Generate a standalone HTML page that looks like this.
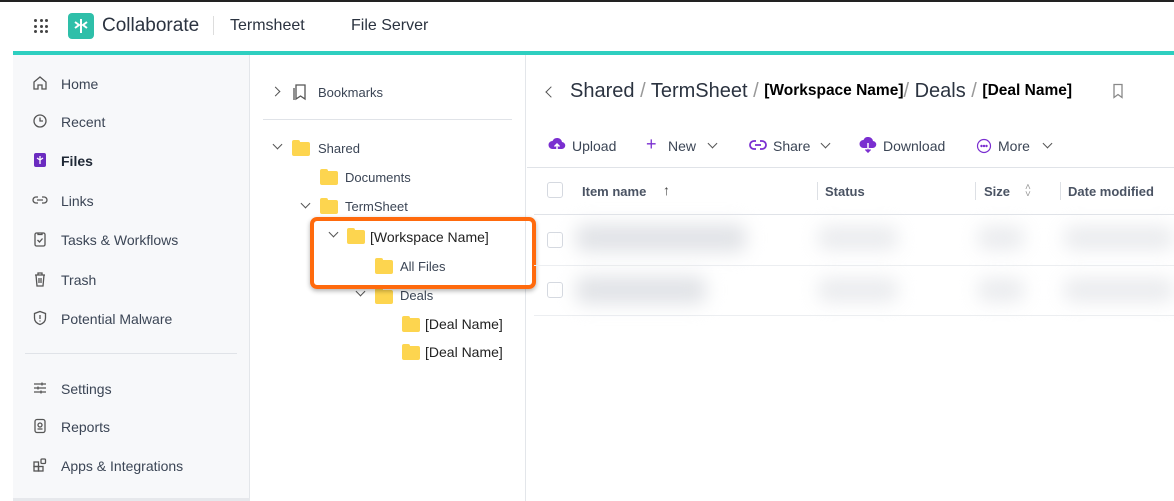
<!DOCTYPE html>
<html><head><meta charset="utf-8"><style>
*{box-sizing:border-box;margin:0;padding:0}
body{width:1174px;height:501px;overflow:hidden;background:#fff;font-family:"Liberation Sans",sans-serif;color:#2f3a4a;position:relative}
.a{position:absolute}
.nav{font-size:14px;color:#3b4555}
.nav svg{position:absolute;left:-29px;top:-1px}
.tree{font-size:13px;color:#3b4555}
.fold{position:absolute;width:18px;height:14px;background:#fdd54f;border-radius:2px}
.fold:before{content:"";position:absolute;left:0;top:-2px;width:8px;height:4px;background:#fdd54f;border-radius:2px 2px 0 0}
.chev{position:absolute;width:7px;height:7px;border-right:1.5px solid #555;border-bottom:1.5px solid #555;transform:rotate(45deg)}
.cb{position:absolute;width:16px;height:16px;border:1px solid #d5d9e0;border-radius:3px;background:#fff}
.tb{font-size:14px;color:#3b4555}
.blur{position:absolute;background:#e1e3e7;filter:blur(9px);border-radius:8px}
</style></head><body>
<div class="a" style="left:0;top:0;width:1174px;height:2px;background:#222"></div>
<div class="a" style="left:34px;top:19px;width:14px;height:14px;display:grid;grid-template-columns:repeat(3,3px);gap:2.5px">
<i style="background:#444;border-radius:50%"></i><i style="background:#444;border-radius:50%"></i><i style="background:#444;border-radius:50%"></i><i style="background:#444;border-radius:50%"></i><i style="background:#444;border-radius:50%"></i><i style="background:#444;border-radius:50%"></i><i style="background:#444;border-radius:50%"></i><i style="background:#444;border-radius:50%"></i><i style="background:#444;border-radius:50%"></i></div>
<div class="a" style="left:68px;top:13px;width:26px;height:26px;background:#2ebfa9;border-radius:4px">
<svg width="26" height="26" viewBox="0 0 26 26" stroke="#fff" stroke-width="2" fill="none"><path d="M13 6v14M7 9l4 3-4 3M19 9l-4 3 4 3"/></svg></div>
<div class="a" style="left:102px;top:15px;font-size:19px;color:#2b3340">Collaborate</div>
<div class="a" style="left:213px;top:16px;width:1px;height:19px;background:#ddd"></div>
<div class="a" style="left:230px;top:17px;font-size:16px;color:#2b3340">Termsheet</div>
<div class="a" style="left:351px;top:17px;font-size:16px;color:#2b3340">File Server</div>
<div class="a" style="left:13px;top:51px;width:1161px;height:4px;background:#2ecfc0"></div>
<div class="a" style="left:13px;top:55px;width:237px;height:446px;background:#f7f8fa;border-right:1px solid #e3e6ea"></div>
<div class="a" style="left:13px;top:498px;width:237px;height:3px;background:#e6e8ec"></div>
<div class="a nav" style="left:61px;top:76px"><svg width="16" height="16" viewBox="0 0 16 16" fill="none" stroke="#555" stroke-width="1.3"><path d="M2 7l6-5 6 5v7h-4v-4H6v4H2z"/></svg>Home</div>
<div class="a nav" style="left:61px;top:114px"><svg width="16" height="16" viewBox="0 0 16 16" fill="none" stroke="#555" stroke-width="1.3"><circle cx="8" cy="8" r="6"/><path d="M8 4.5V8h3"/></svg>Recent</div>
<div class="a nav" style="left:61px;top:153px;font-weight:bold;color:#1f2835"><svg width="16" height="16" viewBox="0 0 16 16"><rect x="2" y="1" width="12" height="14" rx="2" fill="#6b2bc0"/><path d="M8 4v8M5 6l3 2 3-2" stroke="#fff" stroke-width="1.3" fill="none"/></svg>Files</div>
<div class="a nav" style="left:61px;top:193px"><svg width="16" height="16" viewBox="0 0 16 16" fill="none" stroke="#555" stroke-width="1.3"><path d="M6 5H4a3 3 0 000 6h2M10 5h2a3 3 0 010 6h-2M5 8h6"/></svg>Links</div>
<div class="a nav" style="left:61px;top:232px"><svg width="16" height="16" viewBox="0 0 16 16" fill="none" stroke="#555" stroke-width="1.3"><rect x="3" y="2" width="10" height="13" rx="1.5"/><path d="M6 2v1.5h4V2M5.5 9l2 2 3-3.5"/></svg>Tasks &amp; Workflows</div>
<div class="a nav" style="left:61px;top:272px"><svg width="16" height="16" viewBox="0 0 16 16" fill="none" stroke="#555" stroke-width="1.3"><path d="M3 4h10M6 4V2h4v2M4 4l1 11h6l1-11M7 7v5M9 7v5"/></svg>Trash</div>
<div class="a nav" style="left:61px;top:311px"><svg width="16" height="16" viewBox="0 0 16 16" fill="none" stroke="#555" stroke-width="1.3"><path d="M8 1.5l5.5 2v4.5c0 3.5-2.5 5.5-5.5 6.5-3-1-5.5-3-5.5-6.5V3.5z"/><path d="M8 5v4M8 10.5v1"/></svg>Potential Malware</div>
<div class="a" style="left:25px;top:353px;width:212px;height:1px;background:#e0e3e8"></div>
<div class="a nav" style="left:61px;top:381px"><svg width="16" height="16" viewBox="0 0 16 16" fill="none" stroke="#555" stroke-width="1.3"><path d="M2 4h12M2 8h12M2 12h12M10 2.5v3M6 6.5v3M9 10.5v3"/></svg>Settings</div>
<div class="a nav" style="left:61px;top:419px"><svg width="16" height="16" viewBox="0 0 16 16" fill="none" stroke="#555" stroke-width="1.3"><rect x="3" y="1.5" width="10" height="13" rx="2"/><circle cx="8" cy="7" r="2"/><path d="M5.5 11h5"/></svg>Reports</div>
<div class="a nav" style="left:61px;top:458px"><svg width="16" height="16" viewBox="0 0 16 16" fill="none" stroke="#555" stroke-width="1.3"><rect x="2" y="5" width="4.5" height="4.5"/><rect x="2" y="9.5" width="4.5" height="4.5"/><rect x="6.5" y="9.5" width="4.5" height="4.5"/><rect x="9" y="2" width="4.5" height="4.5" rx="1"/></svg>Apps &amp; Integrations</div>
<div class="a" style="left:525px;top:55px;width:1px;height:446px;background:#e3e6ea"></div>
<div class="chev" style="left:272px;top:88px;transform:rotate(-45deg)"></div>
<svg class="a" style="left:292px;top:83px" width="16" height="18" viewBox="0 0 16 18" fill="none" stroke="#555" stroke-width="1.3"><path d="M4 2h9v14l-4.5-3L4 16z"/><path d="M2 5v12"/></svg>
<div class="a tree" style="left:318px;top:85px">Bookmarks</div>
<div class="a" style="left:263px;top:119px;width:249px;height:1px;background:#e0e3e8"></div>
<div class="chev" style="left:274px;top:141px"></div><div class="fold" style="left:292px;top:142px"></div><div class="a tree" style="left:318px;top:141px">Shared</div>
<div class="fold" style="left:320px;top:171px"></div><div class="a tree" style="left:345px;top:170px">Documents</div>
<div class="chev" style="left:302px;top:200px"></div><div class="fold" style="left:320px;top:200px"></div><div class="a tree" style="left:345px;top:199px">TermSheet</div>
<div class="chev" style="left:330px;top:229px"></div><div class="fold" style="left:347px;top:230px"></div><div class="a tree" style="left:370px;top:229px;font-size:14px;color:#222">[Workspace Name]</div>
<div class="fold" style="left:375px;top:260px"></div><div class="a tree" style="left:400px;top:259px">All Files</div>
<div class="chev" style="left:357px;top:288px"></div><div class="fold" style="left:375px;top:290px"></div><div class="a tree" style="left:400px;top:288px">Deals</div>
<div class="fold" style="left:402px;top:318px"></div><div class="a tree" style="left:425px;top:316px;font-size:14px;color:#222">[Deal Name]</div>
<div class="fold" style="left:402px;top:346px"></div><div class="a tree" style="left:425px;top:344px;font-size:14px;color:#222">[Deal Name]</div>
<div class="a" style="left:310px;top:217px;width:226px;height:72px;border:4px solid #ff6a0d;border-radius:7px;box-shadow:0 2px 5px rgba(0,0,0,.3)"></div>
<div class="chev" style="left:547px;top:88px;transform:rotate(135deg);width:8px;height:8px"></div>
<div class="a" style="left:570px;top:80px;font-size:20px;color:#2b3340;white-space:nowrap">Shared <span style="color:#999">/</span> TermSheet <span style="color:#999">/</span> <span style="font-size:15.5px;font-weight:bold;color:#000;position:relative;top:-2px">[Workspace Name]</span><span style="color:#999">/</span> Deals <span style="color:#999">/</span> <span style="font-size:15.5px;font-weight:bold;color:#000;position:relative;top:-2px">[Deal Name]</span></div>
<svg class="a" style="left:1112px;top:83px" width="12" height="16" viewBox="0 0 12 16" fill="none" stroke="#888" stroke-width="1.3"><path d="M2 1.5h8v13l-4-3-4 3z"/></svg>
<svg class="a" style="left:548px;top:137px" width="18" height="16" viewBox="0 0 18 16"><path d="M4.5 12a4 4 0 010-8 5 5 0 019.5 1 3.5 3.5 0 01-.5 7z" fill="#7a2ed0"/><path d="M9 14V7M6.5 9.5L9 7l2.5 2.5" stroke="#fff" stroke-width="1.5" fill="none"/></svg>
<div class="a tb" style="left:572px;top:138px">Upload</div>
<div class="a" style="left:646px;top:134px;font-size:18px;color:#7a2ed0">+</div>
<div class="a tb" style="left:668px;top:138px">New</div><div class="chev" style="left:709px;top:140px"></div>
<svg class="a" style="left:749px;top:139px" width="18" height="12" viewBox="0 0 18 12" fill="none" stroke="#7a2ed0" stroke-width="1.8"><path d="M7 2H5a4 4 0 000 8h2M11 2h2a4 4 0 010 8h-2M6 6h6"/></svg>
<div class="a tb" style="left:773px;top:138px">Share</div><div class="chev" style="left:822px;top:140px"></div>
<svg class="a" style="left:859px;top:137px" width="18" height="16" viewBox="0 0 18 16"><path d="M4.5 11a4 4 0 010-8 5 5 0 019.5 1 3.5 3.5 0 01-.5 7z" fill="#7a2ed0"/><path d="M9 6v9M6.5 12.5L9 15l2.5-2.5" stroke="#7a2ed0" stroke-width="1.5" fill="none"/><path d="M9 6v6" stroke="#fff" stroke-width="1.5"/></svg>
<div class="a tb" style="left:883px;top:138px">Download</div>
<svg class="a" style="left:976px;top:138px" width="16" height="16" viewBox="0 0 16 16" fill="none" stroke="#7a2ed0" stroke-width="1.2"><circle cx="8" cy="8" r="6.5"/><circle cx="5.5" cy="8" r=".6" fill="#7a2ed0"/><circle cx="8" cy="8" r=".6" fill="#7a2ed0"/><circle cx="10.5" cy="8" r=".6" fill="#7a2ed0"/></svg>
<div class="a tb" style="left:998px;top:138px">More</div><div class="chev" style="left:1044px;top:140px"></div>
<div class="a" style="left:527px;top:167px;width:647px;height:1px;background:#e0e3e8"></div>
<div class="cb" style="left:547px;top:182px"></div>
<div class="a" style="left:582px;top:184px;font-size:13px;font-weight:bold;color:#4a5363">Item name</div>
<div class="a" style="left:663px;top:182px;font-size:14px;color:#444;font-weight:bold">↑</div>
<div class="a" style="left:817px;top:182px;width:1px;height:18px;background:#dde0e5"></div>
<div class="a" style="left:825px;top:184px;font-size:13px;font-weight:bold;color:#4a5363">Status</div>
<div class="a" style="left:975px;top:182px;width:1px;height:18px;background:#dde0e5"></div>
<div class="a" style="left:984px;top:184px;font-size:13px;font-weight:bold;color:#4a5363">Size</div>
<div class="a" style="left:1025px;top:184px;font-size:10px;color:#999;line-height:7px">˄<br>˅</div>
<div class="a" style="left:1060px;top:182px;width:1px;height:18px;background:#dde0e5"></div>
<div class="a" style="left:1068px;top:184px;font-size:13px;font-weight:bold;color:#4a5363">Date modified</div>
<div class="a" style="left:534px;top:214px;width:640px;height:1px;background:#e0e3e8"></div>
<div class="a" style="left:534px;top:265px;width:640px;height:1px;background:#eceef1"></div>
<div class="a" style="left:534px;top:315px;width:640px;height:1px;background:#eceef1"></div>
<div class="cb" style="left:547px;top:232px"></div><div class="cb" style="left:547px;top:282px"></div>
<div class="blur" style="left:576px;top:224px;width:170px;height:28px"></div>
<div class="blur" style="left:818px;top:226px;width:80px;height:24px;opacity:.7"></div>
<div class="blur" style="left:978px;top:226px;width:46px;height:24px;opacity:.7"></div>
<div class="blur" style="left:1064px;top:226px;width:110px;height:24px;opacity:.7"></div>
<div class="blur" style="left:576px;top:276px;width:130px;height:28px"></div>
<div class="blur" style="left:818px;top:278px;width:80px;height:24px;opacity:.7"></div>
<div class="blur" style="left:978px;top:278px;width:46px;height:24px;opacity:.7"></div>
<div class="blur" style="left:1064px;top:278px;width:110px;height:24px;opacity:.7"></div>
</body></html>
